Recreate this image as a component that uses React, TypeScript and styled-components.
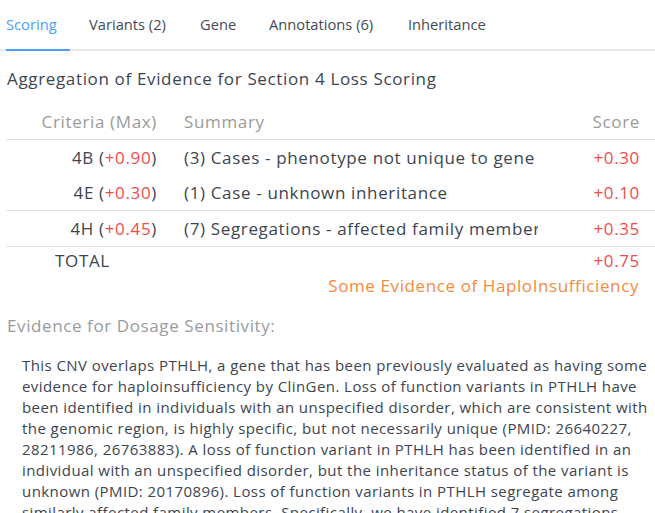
import React from "react";
import styled, { createGlobalStyle } from "styled-components";

const Global = createGlobalStyle`
  html, body { margin: 0; padding: 0; background: #fff; }
  body { font-family: "Open Sans", "Noto Sans", sans-serif; color: #3d4551; overflow: hidden; }
`;

const Page = styled.div`
  width: 655px;
  height: 513px;
  overflow: hidden;
`;

const TabBar = styled.div`
  display: flex;
  height: 49px;
  border-bottom: 2px solid #e8e9ef;
  padding-left: 6px;
`;

const Tab = styled.div<{ $active?: boolean; $w: number }>`
  position: relative;
  width: ${(p) => p.$w}px;
  flex: none;
  font-size: 14.7px;
  line-height: 48px;
  white-space: nowrap;
  color: ${(p) => (p.$active ? "#4a9eff" : "#444b55")};
  &::after {
    content: "";
    display: ${(p) => (p.$active ? "block" : "none")};
    position: absolute;
    left: 0;
    width: 64px;
    bottom: -2px;
    height: 2px;
    background: #4a9eff;
  }
`;

const Title = styled.div`
  font-size: 17px;
  letter-spacing: 0.65px;
  padding: 16px 0 0 7px;
  line-height: 24px;
  color: #3d4551;
  white-space: nowrap;
`;

const Table = styled.table`
  margin: 12px 0 0 6px;
  width: 649px;
  border-collapse: collapse;
  table-layout: fixed;
  font-size: 17px;
  letter-spacing: 0.65px;
`;

const Row = styled.tr<{ $line?: boolean }>`
  border-bottom: ${(p) => (p.$line ? "1px solid #dfe1ea" : "none")};
`;

const Head = styled.th<{ $align: "left" | "right" }>`
  font-weight: 400;
  color: #9b9b9b;
  text-align: ${(p) => p.$align};
  height: 36px;
  padding: 0;
  white-space: nowrap;
`;

const Crit = styled.td`
  text-align: right;
  padding: 0 13px 0 0;
  height: 35px;
  white-space: nowrap;
`;

const Summary = styled.td`
  padding: 0 0 0 14px;
  white-space: nowrap;
  overflow: hidden;
`;

const Score = styled.td`
  text-align: right;
  padding: 0 15px 0 0;
  color: #f24b4b;
  white-space: nowrap;
`;

const Red = styled.span`
  color: #f24b4b;
`;

const TotalLabel = styled.td`
  height: 27px;
  padding: 0 0 0 49px;
  vertical-align: top;
  line-height: 27px;
  white-space: nowrap;
`;

const TotalScore = styled.td`
  text-align: right;
  padding: 0 15px 0 0;
  color: #f24b4b;
  vertical-align: top;
  line-height: 27px;
`;

const Verdict = styled.div`
  margin-top: -1px;
  text-align: right;
  padding-right: 16px;
  font-size: 17px;
  letter-spacing: 0.6px;
  color: #f38b3c;
  line-height: 26px;
  white-space: nowrap;
`;

const SectionLabel = styled.div`
  margin-top: 15px;
  padding-left: 7px;
  font-size: 17px;
  letter-spacing: 0.6px;
  color: #9b9b9b;
  line-height: 24px;
`;

const Para = styled.div`
  margin-top: 17px;
  padding-left: 22px;
  font-size: 15px;
  letter-spacing: 0.43px;
  line-height: 21px;
  color: #3d4551;
`;

const Line = styled.span`
  display: block;
  white-space: nowrap;
`;

const lines = [
  "This CNV overlaps PTHLH, a gene that has been previously evaluated as having some",
  "evidence for haploinsufficiency by ClinGen. Loss of function variants in PTHLH have",
  "been identified in individuals with an unspecified disorder, which are consistent with",
  "the genomic region, is highly specific, but not necessarily unique (PMID: 26640227,",
  "28211986, 26763883). A loss of function variant in PTHLH has been identified in an",
  "individual with an unspecified disorder, but the inheritance status of the variant is",
  "unknown (PMID: 20170896). Loss of function variants in PTHLH segregate among",
  "similarly affected family members. Specifically, we have identified 7 segregations",
];

const tabs = [
  { label: "Scoring", w: 83, active: true },
  { label: "Variants (2)", w: 111 },
  { label: "Gene", w: 69 },
  { label: "Annotations (6)", w: 139 },
  { label: "Inheritance", w: 120 },
];

const rows = [
  { code: "4B", max: "+0.90", summary: "(3) Cases - phenotype not unique to gene", score: "+0.30", line: false },
  { code: "4E", max: "+0.30", summary: "(1) Case - unknown inheritance", score: "+0.10", line: true },
  { code: "4H", max: "+0.45", summary: "(7) Segregations - affected family members", score: "+0.35", line: true },
];

export default function App() {
  return (
    <Page>
      <Global />
      <TabBar>
        {tabs.map((t) => (
          <Tab key={t.label} $active={t.active} $w={t.w}>
            {t.label}
          </Tab>
        ))}
      </TabBar>
      <Title>Aggregation of Evidence for Section 4 Loss Scoring</Title>
      <Table>
        <colgroup>
          <col style={{ width: 164 }} />
          <col style={{ width: 368 }} />
          <col />
        </colgroup>
        <thead>
          <Row $line>
            <Head $align="right" style={{ paddingRight: 13 }}>Criteria (Max)</Head>
            <Head $align="left" style={{ paddingLeft: 14 }}>Summary</Head>
            <Head $align="right" style={{ paddingRight: 15 }}>Score</Head>
          </Row>
        </thead>
        <tbody>
          {rows.map((r) => (
            <Row key={r.code} $line={r.line}>
              <Crit>
                {r.code} (<Red>{r.max}</Red>)
              </Crit>
              <Summary>{r.summary}</Summary>
              <Score>{r.score}</Score>
            </Row>
          ))}
          <Row>
            <TotalLabel>TOTAL</TotalLabel>
            <td />
            <TotalScore>+0.75</TotalScore>
          </Row>
        </tbody>
      </Table>
      <Verdict>Some Evidence of HaploInsufficiency</Verdict>
      <SectionLabel>Evidence for Dosage Sensitivity:</SectionLabel>
      <Para>
        {lines.map((l) => (
          <Line key={l}>{l}</Line>
        ))}
      </Para>
    </Page>
  );
}
